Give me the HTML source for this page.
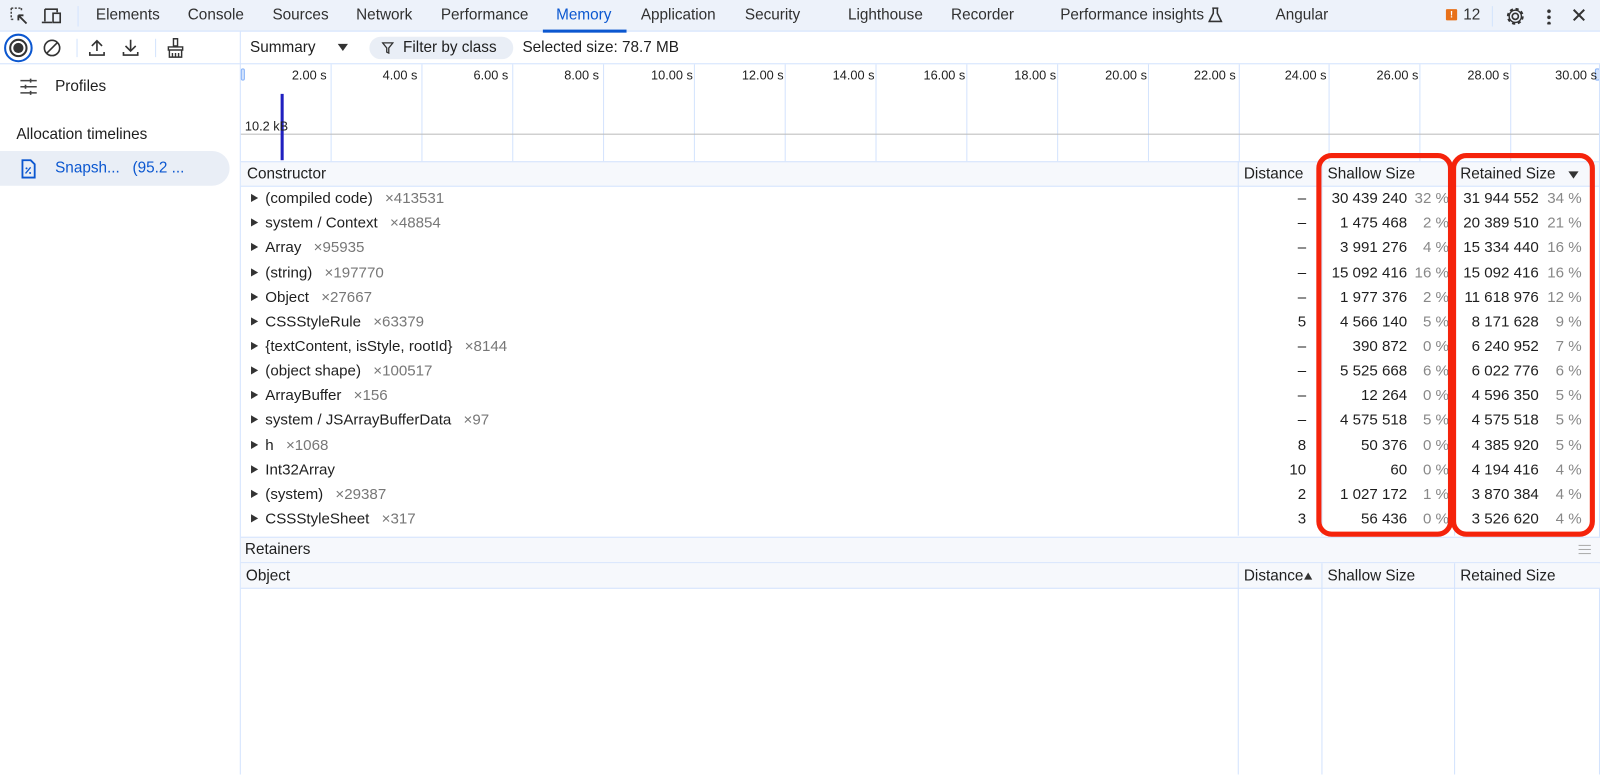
<!DOCTYPE html>
<html><head><meta charset="utf-8"><style>
*{box-sizing:border-box;margin:0;padding:0}
body{width:1600px;height:774px;overflow:hidden;background:#fff;font-family:"Liberation Sans",sans-serif;color:#1f1f1f;position:relative;font-size:13px}
#w{position:absolute;left:0;top:0;width:1568px;height:759px;transform:scale(1.020408);transform-origin:0 0}
.a{position:absolute;white-space:nowrap}
.tab{position:absolute;top:6px;font-size:15px;color:#303030}
.vl{position:absolute;width:1px;background:#d3e3fd}
.row{position:absolute;left:236px;width:1332px;height:24px;line-height:24px;font-size:14.8px}
.row .n{position:absolute;left:10px}
.row .n b{font-weight:normal;display:inline-block;width:0;height:0;border-left:7px solid #333;border-top:4.5px solid transparent;border-bottom:4.5px solid transparent;margin-right:7px;vertical-align:1px}
.row .n i{font-style:normal;color:#777;margin-left:12px}
.row .d{position:absolute;right:288px}
.row .s{position:absolute;right:189px}
.row .sp{position:absolute;right:148px;color:#888}
.row .r{position:absolute;right:60px}
.row .rp{position:absolute;right:18px;color:#888}
.tl{position:absolute;top:67px;font-size:12.5px}
.h{font-size:15px}
.red{position:absolute;border:5px solid #f5230b;border-radius:15px}
</style></head><body><div id="w">
<div class="a" style="left:0;top:0;width:1568px;height:31px;background:#edf2fa;border-bottom:1px solid #d3e3fd"></div>
<svg class="a" style="left:10px;top:7px" width="18" height="18" viewBox="0 0 18 18"><path d="M1 1h10M1 1v11M1 12h2M11 1v2" stroke="#444" stroke-width="1.5" stroke-dasharray="2 1.5" fill="none"/><path d="M8 8l8 8M8 8h5M8 8v5" stroke="#333" stroke-width="1.8" fill="none"/></svg>
<svg class="a" style="left:40px;top:7px" width="22" height="18" viewBox="0 0 22 18"><path d="M4 2h12v3M4 2v12M1 15h10" stroke="#333" stroke-width="1.6" fill="none"/><rect x="12" y="6" width="7" height="9" stroke="#333" stroke-width="1.6" fill="none"/></svg>
<div class="vl" style="left:76px;top:6px;height:20px"></div>
<div class="tab" style="left:94px">Elements</div>
<div class="tab" style="left:184px">Console</div>
<div class="tab" style="left:267px">Sources</div>
<div class="tab" style="left:349px">Network</div>
<div class="tab" style="left:432px">Performance</div>
<div class="tab" style="left:545px;color:#0b57d0">Memory</div>
<div class="a" style="left:532px;top:29px;width:82px;height:3px;background:#0b57d0"></div>
<div class="tab" style="left:628px">Application</div>
<div class="tab" style="left:730px">Security</div>
<div class="tab" style="left:831px">Lighthouse</div>
<div class="tab" style="left:932px">Recorder</div>
<div class="tab" style="left:1039px">Performance insights</div>
<svg class="a" style="left:1184px;top:7px" width="14" height="16" viewBox="0 0 14 16"><path d="M4 1h6M5 1v5L1 14h12L9 6V1" stroke="#333" stroke-width="1.5" fill="none"/></svg>
<div class="tab" style="left:1250px">Angular</div>
<div class="a" style="left:1417px;top:9px;width:11px;height:11px;background:#e8711a;border-radius:1px;color:#fff;font-size:9px;font-weight:bold;text-align:center;line-height:11px">!</div>
<div class="tab" style="left:1434px">12</div>
<div class="vl" style="left:1462px;top:6px;height:20px"></div>
<svg class="a" style="left:1475px;top:6px" width="20" height="20" viewBox="0 0 20 20"><circle cx="10" cy="10" r="3" stroke="#333" stroke-width="1.6" fill="none"/><circle cx="10" cy="10" r="7" stroke="#333" stroke-width="2.5" fill="none" stroke-dasharray="3 2.5"/><circle cx="10" cy="10" r="6" stroke="#333" stroke-width="1.4" fill="none"/></svg>
<div class="a" style="left:1516px;top:8px;width:4px;height:16px;background:radial-gradient(circle,#333 1.6px,transparent 2px) 0 0/4px 6px"></div>
<div class="a" style="left:1539px;top:3px;font-size:20px;color:#333">✕</div>

<div class="a" style="left:0;top:31px;width:1568px;height:32px;border-bottom:1px solid #d3e3fd"></div>
<div class="a" style="left:4px;top:33px;width:28px;height:28px;border:2px solid #0b57d0;border-radius:50%"></div>
<div class="a" style="left:9px;top:38px;width:18px;height:18px;border:2px solid #333;border-radius:50%"></div>
<div class="a" style="left:13px;top:42px;width:10px;height:10px;background:#333;border-radius:50%"></div>
<svg class="a" style="left:42px;top:38px" width="18" height="18" viewBox="0 0 18 18"><circle cx="9" cy="9" r="7.5" stroke="#333" stroke-width="1.6" fill="none"/><path d="M4 14L14 4" stroke="#333" stroke-width="1.6"/></svg>
<div class="vl" style="left:75px;top:38px;height:18px"></div>
<svg class="a" style="left:87px;top:38px" width="16" height="18" viewBox="0 0 16 18"><path d="M8 12V2M3 7l5-5 5 5M1 13v3h14v-3" stroke="#333" stroke-width="1.6" fill="none"/></svg>
<svg class="a" style="left:120px;top:38px" width="16" height="18" viewBox="0 0 16 18"><path d="M8 1v11M3 7l5 5 5-5M1 13v3h14v-3" stroke="#333" stroke-width="1.6" fill="none"/></svg>
<div class="vl" style="left:152px;top:38px;height:18px"></div>
<svg class="a" style="left:163px;top:37px" width="18" height="20" viewBox="0 0 18 20"><path d="M7 1h4v7H7zM2 9h14v3H2zM3 12v7h12v-7M6 15v4M9 15v4M12 15v4" stroke="#333" stroke-width="1.4" fill="none"/></svg>
<div class="vl" style="left:235px;top:31px;height:728px"></div>
<div class="a h" style="left:245px;top:38px">Summary</div>
<div class="a" style="left:331px;top:43px;border-top:7px solid #333;border-left:5px solid transparent;border-right:5px solid transparent"></div>
<div class="a" style="left:362px;top:36px;width:141px;height:22px;background:#e9eef6;border-radius:11px"></div>
<svg class="a" style="left:374px;top:41px" width="12" height="12" viewBox="0 0 12 12"><path d="M1 1h10L7 6v5L5 10V6z" stroke="#333" stroke-width="1.3" fill="none"/></svg>
<div class="a h" style="left:395px;top:38px">Filter by class</div>
<div class="a h" style="left:512px;top:38px">Selected size: 78.7 MB</div>

<svg class="a" style="left:19px;top:76px" width="18" height="18" viewBox="0 0 18 18"><path d="M1 3h16M1 9h16M1 15h16" stroke="#444" stroke-width="1.4"/><path d="M11 1v4M6 7v4M11 13v4" stroke="#444" stroke-width="1.6"/></svg>
<div class="a h" style="left:54px;top:76px">Profiles</div>
<div class="a h" style="left:16px;top:123px">Allocation timelines</div>
<div class="a" style="left:0;top:148px;width:225px;height:34px;background:#e9eef6;border-radius:0 17px 17px 0"></div>
<svg class="a" style="left:20px;top:156px" width="16" height="19" viewBox="0 0 16 19"><path d="M2 1h8l4 4v13H2z" stroke="#0b57d0" stroke-width="1.8" fill="none"/><path d="M5 14l5-6" stroke="#0b57d0" stroke-width="1.3"/><circle cx="6" cy="9" r="1" fill="#0b57d0"/><circle cx="9.5" cy="13.5" r="1" fill="#0b57d0"/></svg>
<div class="a h" style="left:54px;top:156px;color:#0b57d0">Snapsh...&nbsp;&nbsp;&nbsp;(95.2 ...</div>

<div class="a" style="left:236px;top:67px;width:4px;height:12px;border:1px solid #8ab4f8;background:#d3e3fd;border-radius:2px"></div>
<div class="a" style="left:1563px;top:67px;width:5px;height:12px;border:1px solid #8ab4f8;background:#d3e3fd;border-radius:2px"></div>
<div class="vl" style="left:324px;top:63px;height:95px"></div><div class="tl" style="left:286px">2.00 s</div>
<div class="vl" style="left:413px;top:63px;height:95px"></div><div class="tl" style="left:375px">4.00 s</div>
<div class="vl" style="left:502px;top:63px;height:95px"></div><div class="tl" style="left:464px">6.00 s</div>
<div class="vl" style="left:591px;top:63px;height:95px"></div><div class="tl" style="left:553px">8.00 s</div>
<div class="vl" style="left:680px;top:63px;height:95px"></div><div class="tl" style="left:638px">10.00 s</div>
<div class="vl" style="left:769px;top:63px;height:95px"></div><div class="tl" style="left:727px">12.00 s</div>
<div class="vl" style="left:858px;top:63px;height:95px"></div><div class="tl" style="left:816px">14.00 s</div>
<div class="vl" style="left:947px;top:63px;height:95px"></div><div class="tl" style="left:905px">16.00 s</div>
<div class="vl" style="left:1036px;top:63px;height:95px"></div><div class="tl" style="left:994px">18.00 s</div>
<div class="vl" style="left:1125px;top:63px;height:95px"></div><div class="tl" style="left:1083px">20.00 s</div>
<div class="vl" style="left:1214px;top:63px;height:95px"></div><div class="tl" style="left:1170px">22.00 s</div>
<div class="vl" style="left:1302px;top:63px;height:95px"></div><div class="tl" style="left:1259px">24.00 s</div>
<div class="vl" style="left:1391px;top:63px;height:95px"></div><div class="tl" style="left:1349px">26.00 s</div>
<div class="vl" style="left:1480px;top:63px;height:95px"></div><div class="tl" style="left:1438px">28.00 s</div>
<div class="tl" style="left:1524px">30.00 s</div>
<div class="a" style="left:236px;top:131px;width:1332px;height:1px;background:#bbb"></div>
<div class="a" style="left:275px;top:92px;width:3px;height:65px;background:#2020c0"></div>
<div class="a" style="left:240px;top:117px;font-size:12.5px">10.2 kB</div>

<div class="a" style="left:236px;top:158px;width:1332px;height:25px;background:#f6f8fc;border-top:1px solid #d3e3fd;border-bottom:1px solid #d3e3fd"></div>
<div class="a h" style="left:242px;top:162px">Constructor</div>
<div class="a h" style="left:1219px;top:162px">Distance</div>
<div class="a h" style="left:1301px;top:162px">Shallow Size</div>
<div class="a h" style="left:1431px;top:162px">Retained Size</div>
<div class="a" style="left:1537px;top:168px;border-top:7px solid #333;border-left:5px solid transparent;border-right:5px solid transparent"></div>
<div class="vl" style="left:1213px;top:158px;height:367px"></div>
<div class="vl" style="left:1295px;top:158px;height:367px"></div>
<div class="vl" style="left:1425px;top:158px;height:367px"></div>
<div class="vl" style="left:1567px;top:63px;height:696px"></div>

<div class="row" style="top:183px"><span class="n"><b></b>(compiled code)<i>×413531</i></span><span class="d">–</span><span class="s">30 439 240</span><span class="sp">32 %</span><span class="r">31 944 552</span><span class="rp">34 %</span></div>
<div class="row" style="top:207px"><span class="n"><b></b>system / Context<i>×48854</i></span><span class="d">–</span><span class="s">1 475 468</span><span class="sp">2 %</span><span class="r">20 389 510</span><span class="rp">21 %</span></div>
<div class="row" style="top:231px"><span class="n"><b></b>Array<i>×95935</i></span><span class="d">–</span><span class="s">3 991 276</span><span class="sp">4 %</span><span class="r">15 334 440</span><span class="rp">16 %</span></div>
<div class="row" style="top:256px"><span class="n"><b></b>(string)<i>×197770</i></span><span class="d">–</span><span class="s">15 092 416</span><span class="sp">16 %</span><span class="r">15 092 416</span><span class="rp">16 %</span></div>
<div class="row" style="top:280px"><span class="n"><b></b>Object<i>×27667</i></span><span class="d">–</span><span class="s">1 977 376</span><span class="sp">2 %</span><span class="r">11 618 976</span><span class="rp">12 %</span></div>
<div class="row" style="top:304px"><span class="n"><b></b>CSSStyleRule<i>×63379</i></span><span class="d">5</span><span class="s">4 566 140</span><span class="sp">5 %</span><span class="r">8 171 628</span><span class="rp">9 %</span></div>
<div class="row" style="top:328px"><span class="n"><b></b>{textContent, isStyle, rootId}<i>×8144</i></span><span class="d">–</span><span class="s">390 872</span><span class="sp">0 %</span><span class="r">6 240 952</span><span class="rp">7 %</span></div>
<div class="row" style="top:352px"><span class="n"><b></b>(object shape)<i>×100517</i></span><span class="d">–</span><span class="s">5 525 668</span><span class="sp">6 %</span><span class="r">6 022 776</span><span class="rp">6 %</span></div>
<div class="row" style="top:376px"><span class="n"><b></b>ArrayBuffer<i>×156</i></span><span class="d">–</span><span class="s">12 264</span><span class="sp">0 %</span><span class="r">4 596 350</span><span class="rp">5 %</span></div>
<div class="row" style="top:400px"><span class="n"><b></b>system / JSArrayBufferData<i>×97</i></span><span class="d">–</span><span class="s">4 575 518</span><span class="sp">5 %</span><span class="r">4 575 518</span><span class="rp">5 %</span></div>
<div class="row" style="top:425px"><span class="n"><b></b>h<i>×1068</i></span><span class="d">8</span><span class="s">50 376</span><span class="sp">0 %</span><span class="r">4 385 920</span><span class="rp">5 %</span></div>
<div class="row" style="top:449px"><span class="n"><b></b>Int32Array</span><span class="d">10</span><span class="s">60</span><span class="sp">0 %</span><span class="r">4 194 416</span><span class="rp">4 %</span></div>
<div class="row" style="top:473px"><span class="n"><b></b>(system)<i>×29387</i></span><span class="d">2</span><span class="s">1 027 172</span><span class="sp">1 %</span><span class="r">3 870 384</span><span class="rp">4 %</span></div>
<div class="row" style="top:497px"><span class="n"><b></b>CSSStyleSheet<i>×317</i></span><span class="d">3</span><span class="s">56 436</span><span class="sp">0 %</span><span class="r">3 526 620</span><span class="rp">4 %</span></div>

<div class="a" style="left:236px;top:526px;width:1332px;height:26px;background:#f6f8fc;border-top:1px solid #d3e3fd;border-bottom:1px solid #d3e3fd"></div>
<div class="a h" style="left:240px;top:530px">Retainers</div>
<div class="a" style="left:1547px;top:534px;width:12px;height:9px;border-top:1px solid #aaa;border-bottom:1px solid #aaa"></div>
<div class="a" style="left:1547px;top:538px;width:12px;height:1px;background:#aaa"></div>
<div class="a" style="left:236px;top:552px;width:1332px;height:25px;background:#f6f8fc;border-bottom:1px solid #d3e3fd"></div>
<div class="a h" style="left:241px;top:556px">Object</div>
<div class="a h" style="left:1219px;top:556px">Distance</div>
<div class="a" style="left:1278px;top:561px;border-bottom:7px solid #333;border-left:4.5px solid transparent;border-right:4.5px solid transparent"></div>
<div class="a h" style="left:1301px;top:556px">Shallow Size</div>
<div class="a h" style="left:1431px;top:556px">Retained Size</div>
<div class="vl" style="left:1213px;top:552px;height:207px"></div>
<div class="vl" style="left:1295px;top:552px;height:207px"></div>
<div class="vl" style="left:1425px;top:552px;height:207px"></div>

<div class="red" style="left:1290px;top:150px;width:134px;height:376px"></div>
<div class="red" style="left:1422px;top:150px;width:141px;height:376px"></div>
</div></body></html>
